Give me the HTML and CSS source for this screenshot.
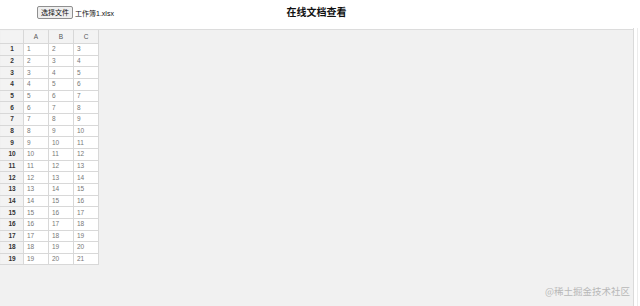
FILE: index.html
```html
<!DOCTYPE html>
<html lang="zh">
<head>
<meta charset="utf-8">
<title>在线文档查看</title>
<link rel="stylesheet" href="styles.css">
</head>
<body>
<div class="page">
  <div class="main">
    <header class="topbar">
      <div class="file">
        <button class="btn" type="button">选择文件</button>
        <span class="fname">工作簿1.xlsx</span>
      </div>
      <h1 class="title">在线文档查看</h1>
      <div></div>
    </header>
    <section class="sheet">
      <table class="grid">
        <thead>
          <tr><th class="corner"></th><th>A</th><th>B</th><th>C</th></tr>
        </thead>
        <tbody id="rows"></tbody>
      </table>
      <div class="mark">@稀土掘金技术社区</div>
    </section>
  </div>
  <div class="strip"></div>
</div>
<script src="app.js"></script>
</body>
</html>
```
FILE: app.js
```js
var tb = document.getElementById('rows');
var html = '';
for (var i = 1; i <= 19; i++) {
  html += '<tr><th class="rh">' + i + '</th><td>' + i + '</td><td>' + (i + 1) + '</td><td>' + (i + 2) + '</td></tr>';
}
tb.innerHTML = html;
```
FILE: styles.css
```css
html, body {
  margin: 0;
  padding: 0;
  background: #fff;
}
body {
  font-family: "Liberation Sans", "Noto Sans CJK SC", sans-serif;
}
.page {
  display: flex;
  width: 640px;
  height: 306px;
  overflow: hidden;
}
.main {
  width: 633px;
  display: flex;
  flex-direction: column;
}
.topbar {
  height: 30px;
  display: grid;
  grid-template-columns: 1fr auto 1fr;
  align-items: center;
  box-sizing: border-box;
  border-bottom: 1px solid #dcdcdc;
}
.file {
  display: flex;
  align-items: center;
  padding-left: 37px;
  padding-bottom: 4px;
}
.btn {
  font-family: "Noto Sans CJK SC", sans-serif;
  font-size: 7px;
  line-height: 9px;
  height: 13px;
  width: 36px;
  padding: 0;
  color: #111;
  background: #efefef;
  border: 1px solid #8f8f8f;
  border-radius: 2px;
}
.fname {
  margin-left: 2px;
  font-family: "Liberation Sans", "Noto Sans CJK SC", sans-serif;
  font-size: 7px;
  color: #111;
}
.title {
  margin: 0;
  padding-bottom: 6px;
  font-family: "Noto Sans CJK SC", sans-serif;
  font-size: 10px;
  font-weight: 700;
  color: #111;
}
.sheet {
  position: relative;
  flex: 1;
  background: #f1f1f1;
}
.grid {
  border-collapse: collapse;
  font-size: 6.5px;
}
.grid th, .grid td {
  border: 1px solid #d8d8d8;
  padding: 0;
  line-height: 10px;
  font-weight: 400;
}
.grid thead tr {
  height: 13px;
}
.grid tbody tr {
  height: 11.67px;
}
.grid thead th {
  width: 24px;
  background: #f3f3f3;
  color: #555;
  text-align: center;
  border-top-color: #f1f1f1;
}
.grid thead th.corner {
  width: 22px;
  border-left-color: #f1f1f1;
}
.grid .rh {
  background: #f3f3f3;
  color: #333;
  text-align: center;
  font-weight: 700;
  border-left-color: #f1f1f1;
}
.grid td {
  background: #fff;
  color: #777;
  text-align: left;
  padding-left: 3px;
  width: 21px;
}
.mark {
  position: absolute;
  right: 3px;
  bottom: 8px;
  font-family: "Noto Sans CJK SC", sans-serif;
  font-size: 9.5px;
  color: #b8b8b8;
}
.strip {
  width: 7px;
  box-sizing: border-box;
  border-left: 1px solid #dadada;
  background: #fff;
  margin-top: 28px;
}
.strip::after {
  content: "";
  display: block;
  margin-left: 3px;
  width: 1px;
  height: 100%;
  background: #ececec;
}
```
